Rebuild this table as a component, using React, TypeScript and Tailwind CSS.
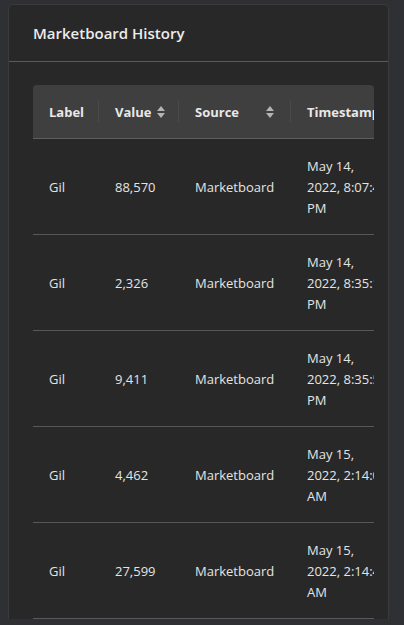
import React from "react";

const rows = [
  { label: "Gil", value: "88,570", source: "Marketboard", date: "May 14,", time: "2022, 8:07:41", ampm: "PM" },
  { label: "Gil", value: "2,326", source: "Marketboard", date: "May 14,", time: "2022, 8:35:12", ampm: "PM" },
  { label: "Gil", value: "9,411", source: "Marketboard", date: "May 14,", time: "2022, 8:35:58", ampm: "PM" },
  { label: "Gil", value: "4,462", source: "Marketboard", date: "May 15,", time: "2022, 2:14:03", ampm: "AM" },
  { label: "Gil", value: "27,599", source: "Marketboard", date: "May 15,", time: "2022, 2:14:47", ampm: "AM" },
];

function SortIcon() {
  return (
    <svg width="8" height="12" viewBox="0 0 8 12" className="shrink-0 text-[#b4b4b4]">
      <path d="M4 0 L8 5 H0 Z" fill="currentColor" />
      <path d="M0 7 H8 L4 12 Z" fill="currentColor" />
    </svg>
  );
}

export default function App() {
  return (
    <div className="min-h-screen bg-[#2e3034] pl-2 pr-[15px] pt-1 font-['Open_Sans',sans-serif] text-[#e4e4e4]">
      <div className="rounded-t-[5px] border border-b-0 border-[#3b3b3b] bg-[#282828]">
        <div className="flex h-[57px] items-center border-b border-[#5a5a5a] px-6 text-[15px] font-semibold text-[#ececec]">
          Marketboard History
        </div>
        <div className="pl-6 pr-[14px] pt-[23px]">
          <div className="overflow-hidden rounded-t-[4px]">
            <table className="w-[400px] table-fixed border-collapse text-[13px]">
              <colgroup>
                <col className="w-[66px]" />
                <col className="w-[80px]" />
                <col className="w-[112px]" />
                <col className="w-[142px]" />
              </colgroup>
              <thead>
                <tr className="h-[53px] border-b border-[#5e5e5e] bg-[#3f3f3f] font-bold text-[#e8e8e8]">
                  <th className="relative px-4 pt-[2px] text-left">
                    Label
                    <span className="absolute right-0 top-4 h-[21px] w-px bg-[#4a4a4a]" />
                  </th>
                  <th className="relative pl-4 pr-2 pt-[2px] text-left">
                    <span className="flex items-center gap-[5px]">
                      Value <SortIcon />
                    </span>
                    <span className="absolute right-0 top-4 h-[21px] w-px bg-[#4a4a4a]" />
                  </th>
                  <th className="relative pl-4 pr-[17px] pt-[2px] text-left">
                    <span className="flex items-center justify-between">
                      Source <SortIcon />
                    </span>
                    <span className="absolute right-0 top-4 h-[21px] w-px bg-[#4a4a4a]" />
                  </th>
                  <th className="whitespace-nowrap px-4 pt-[2px] text-left">Timestamp</th>
                </tr>
              </thead>
              <tbody>
                {rows.map((r, i) => (
                  <tr key={i} className="h-[96px] border-b border-[#585858]">
                    <td className="px-4 pt-[3px]">{r.label}</td>
                    <td className="px-4 pt-[3px]">{r.value}</td>
                    <td className="px-4 pt-[3px]">{r.source}</td>
                    <td className="whitespace-nowrap px-4 pt-[3px] leading-[21px]">
                      {r.date}
                      <br />
                      {r.time}
                      <br />
                      {r.ampm}
                    </td>
                  </tr>
                ))}
              </tbody>
            </table>
          </div>
        </div>
      </div>
    </div>
  );
}
